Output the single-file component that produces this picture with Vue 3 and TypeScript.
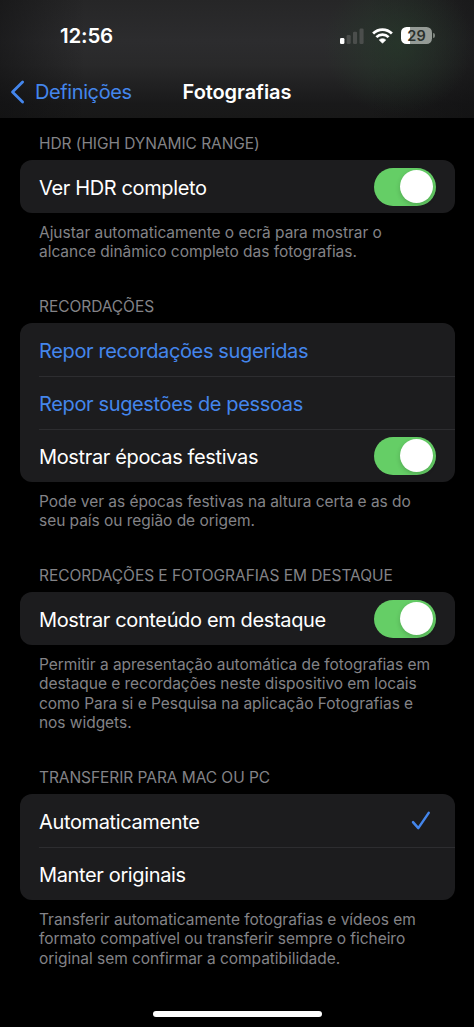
<script setup lang="ts">
import { ref } from 'vue'

interface Row {
  id: string
  label: string
  kind: 'toggle' | 'link' | 'option'
}

interface Section {
  title: string
  rows: Row[]
  note: string[]
}

const sections: Section[] = [
  {
    title: 'HDR (HIGH DYNAMIC RANGE)',
    rows: [{ id: 'hdr', label: 'Ver HDR completo', kind: 'toggle' }],
    note: ['Ajustar automaticamente o ecrã para mostrar o', 'alcance dinâmico completo das fotografias.'],
  },
  {
    title: 'RECORDAÇÕES',
    rows: [
      { id: 'reset-memories', label: 'Repor recordações sugeridas', kind: 'link' },
      { id: 'reset-people', label: 'Repor sugestões de pessoas', kind: 'link' },
      { id: 'holidays', label: 'Mostrar épocas festivas', kind: 'toggle' },
    ],
    note: ['Pode ver as épocas festivas na altura certa e as do', 'seu país ou região de origem.'],
  },
  {
    title: 'RECORDAÇÕES E FOTOGRAFIAS EM DESTAQUE',
    rows: [{ id: 'featured', label: 'Mostrar conteúdo em destaque', kind: 'toggle' }],
    note: [
      'Permitir a apresentação automática de fotografias em',
      'destaque e recordações neste dispositivo em locais',
      'como Para si e Pesquisa na aplicação Fotografias e',
      'nos widgets.',
    ],
  },
  {
    title: 'TRANSFERIR PARA MAC OU PC',
    rows: [
      { id: 'auto', label: 'Automaticamente', kind: 'option' },
      { id: 'originals', label: 'Manter originais', kind: 'option' },
    ],
    note: [
      'Transferir automaticamente fotografias e vídeos em',
      'formato compatível ou transferir sempre o ficheiro',
      'original sem confirmar a compatibilidade.',
    ],
  },
]

const enabled = ref<Record<string, boolean>>({ hdr: true, holidays: true, featured: true })
const transfer = ref('auto')

function activate(row: Row) {
  if (row.kind === 'toggle') enabled.value[row.id] = !enabled.value[row.id]
  if (row.kind === 'option') transfer.value = row.id
}
</script>

<template>
  <div class="screen">
    <header class="top">
      <div class="status">
        <span class="time">12:56</span>
        <div class="indicators">
          <svg class="signal" width="25" height="16" viewBox="0 0 25 16">
            <rect x="0" y="10" width="4.4" height="6" rx="1.3" fill="#fff" />
            <rect x="6.6" y="7" width="4.1" height="9" rx="1.2" fill="#4b4e4c" />
            <rect x="13" y="3.7" width="4.1" height="12.3" rx="1.2" fill="#4b4e4c" />
            <rect x="19.5" y="0.5" width="4.1" height="15.5" rx="1.2" fill="#4b4e4c" />
          </svg>
          <svg class="wifi" width="21" height="16" viewBox="0 0 21 16">
            <g fill="none" stroke="#fff" stroke-width="2.7">
              <path d="M1.1 5.5C6.4.2 14.6.2 19.9 5.5" />
              <path d="M4.4 9.1C7.8 5.7 13.2 5.7 16.6 9.1" />
            </g>
            <path d="M7.2 11.9C9 10.2 12 10.2 13.8 11.9L10.5 15.3Z" fill="#fff" stroke="#fff" stroke-width=".6" stroke-linejoin="round" />
          </svg>
          <div class="battery"><span>29</span></div>
          <i class="battery-cap"></i>
        </div>
      </div>
      <nav class="nav">
        <a class="back">
          <svg width="15" height="24" viewBox="0 0 15 24">
            <path d="M12.6 2.1 2.5 12 12.6 21.9" fill="none" stroke="#4486ec" stroke-width="2.8" stroke-linecap="round" stroke-linejoin="round" />
          </svg>
          <span>Definições</span>
        </a>
        <h1>Fotografias</h1>
      </nav>
    </header>

    <main>
      <section v-for="section in sections" :key="section.title">
        <h2>{{ section.title }}</h2>
        <div class="card">
          <div v-for="row in section.rows" :key="row.id" class="row" :class="row.kind" @click="activate(row)">
            <span class="label">{{ row.label }}</span>
            <span v-if="row.kind === 'toggle'" class="switch" :class="{ on: enabled[row.id] }"></span>
            <svg v-if="row.kind === 'option' && transfer === row.id" class="check" width="20" height="20" viewBox="0 0 20 20">
              <path d="M2 11.1 7.3 17.1 17.7 1.9" fill="none" stroke="#4486ec" stroke-width="2.5" stroke-linecap="round" stroke-linejoin="round" />
            </svg>
          </div>
        </div>
        <p><span v-for="line in section.note" :key="line">{{ line }}</span></p>
      </section>
    </main>
    <div class="home"></div>
  </div>
</template>

<style>
body {
  background: #000;
}
</style>

<style scoped>
.screen {
  width: 474px;
  height: 1027px;
  overflow: hidden;
  display: flex;
  flex-direction: column;
  background: #000;
  color: #fff;
  font-family: Inter, "Liberation Sans", sans-serif;
}
.top {
  height: 118px;
  flex: none;
  background:
    radial-gradient(ellipse 75px 70px at 398px 44px, rgba(38, 58, 42, 0.7), rgba(38, 58, 42, 0) 100%),
    linear-gradient(90deg, rgba(15, 15, 16, 0.55), rgba(15, 15, 16, 0) 18%, rgba(15, 15, 16, 0) 78%, rgba(15, 15, 16, 0.55)),
    linear-gradient(#262627, #2c2c2e 35%, #29292a 55%, #19191a 88%, #181818);
}
.status {
  height: 70px;
  box-sizing: border-box;
  padding: 1px 39px 0 60px;
  display: flex;
  align-items: center;
  justify-content: space-between;
}
.time {
  font-size: 20.5px;
  font-weight: 600;
  letter-spacing: -0.2px;
}
.indicators {
  display: flex;
  align-items: center;
}
.wifi {
  margin-left: 7.5px;
}
.battery {
  width: 31px;
  height: 17px;
  margin-left: 8px;
  border-radius: 5.5px;
  background: linear-gradient(90deg, #fff 29%, #959b96 29%);
  color: #2b312c;
  font-size: 14.5px;
  font-weight: 600;
  line-height: 17px;
  text-align: center;
}
.battery-cap {
  width: 2px;
  height: 5px;
  margin-left: 1px;
  border-radius: 0 2px 2px 0;
  background: #7c837d;
}
.nav {
  height: 43px;
  display: grid;
  grid-template-columns: 1fr auto 1fr;
  align-items: center;
}
.back {
  display: flex;
  align-items: center;
  gap: 10px;
  padding-left: 10px;
  color: #4486ec;
  font-size: 20px;
  letter-spacing: -0.4px;
}
h1 {
  margin: 0;
  font-size: 20px;
  font-weight: 600;
  letter-spacing: -0.08px;
}
main {
  height: 868px;
  box-sizing: border-box;
  flex: none;
  padding-top: 15.9px;
}
section {
  padding: 0 19.5px 35.5px;
}
h2 {
  margin: 0 0 6.5px 19.5px;
  font-size: 15.5px;
  line-height: 20px;
  font-weight: 400;
  letter-spacing: -0.06px;
  color: #838387;
}
.card {
  border-radius: 12px;
  background: #1c1c1e;
}
.row {
  position: relative;
  height: 53px;
  box-sizing: border-box;
  padding: 0 19px 0 19.5px;
  display: flex;
  align-items: center;
  justify-content: space-between;
  font-size: 20px;
  letter-spacing: -0.36px;
}
.row + .row::before {
  content: "";
  position: absolute;
  top: 0;
  right: 0;
  left: 19.5px;
  height: 1px;
  background: #2d2d30;
}
.link {
  color: #4486ec;
}
.label {
  padding-top: 1.6px;
}
.switch {
  width: 61.5px;
  height: 38px;
  box-sizing: border-box;
  padding: 2.5px;
  display: flex;
  border-radius: 19px;
  background: #39393d;
}
.switch.on {
  justify-content: flex-end;
  background: #65ce66;
}
.switch::after {
  content: "";
  width: 33px;
  height: 33px;
  border-radius: 50%;
  background: #fff;
  box-shadow: 0 2px 5px rgba(0, 0, 0, 0.18);
}
.check {
  margin-right: 4.5px;
}
p {
  margin: 9.3px 0 -0.3px 19.5px;
  font-size: 15.5px;
  line-height: 19.5px;
  letter-spacing: -0.04px;
  color: #838387;
}
p span {
  display: block;
  white-space: nowrap;
}
.home {
  width: 169px;
  height: 6px;
  flex: none;
  margin: 25px auto 0;
  border-radius: 3px;
  background: #fff;
}
</style>
